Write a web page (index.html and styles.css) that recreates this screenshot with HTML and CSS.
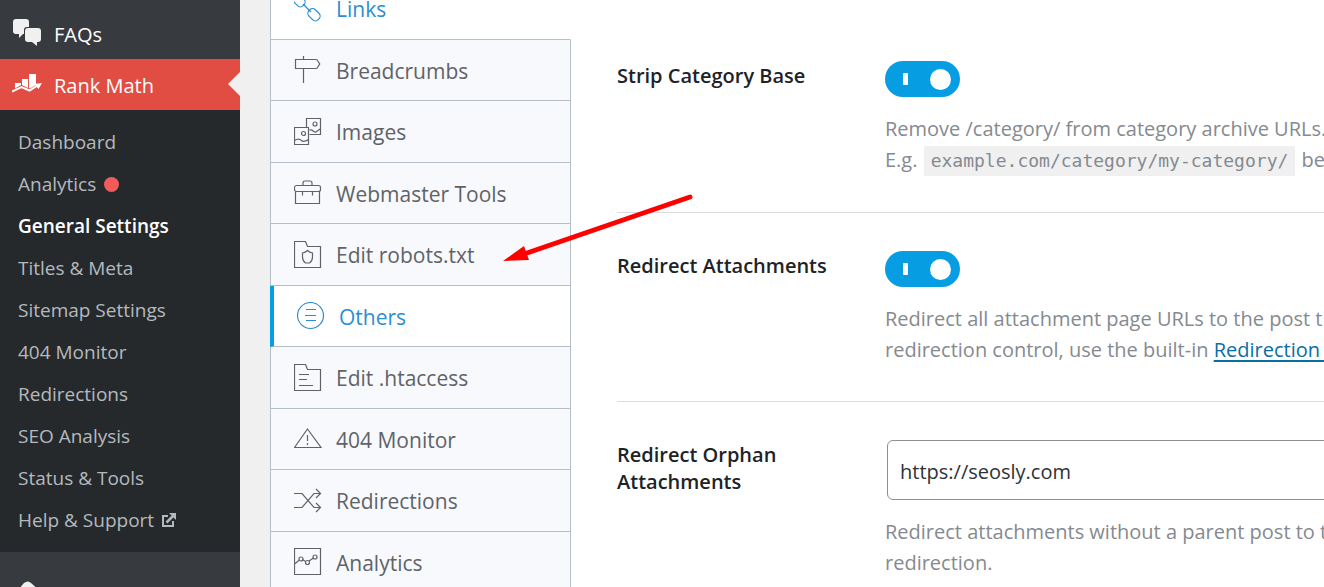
FILE: index.html
```html
<!DOCTYPE html>
<html lang="en">
<head>
    <meta charset="UTF-8">
    <meta name="viewport" content="width=device-width, initial-scale=1.0">
    <title>General Settings | Rank Math</title>
    <link rel="stylesheet" href="styles.css">
</head>
<body>
    <div class="page">
        <aside class="sidebar">
            <a href="#" class="menu-item">
                <svg class="menu-icon" viewBox="0 0 30 30" fill="#f0f0f1">
                    <path d="M4 0h10q3 0 3 3v5h-2q-3 0-3 3v4h-1l-4 4v-4H4q-3 0-3-3V3q0-3 3-3z"/>
                    <path d="M16 9h10q3 0 3 3v8q0 3-3 3h-1v4l-5-4h-4q-3 0-3-3v-8q0-3 3-3z"/>
                </svg>
                FAQs
            </a>
            <a href="#" class="menu-item current">
                <svg class="menu-icon" viewBox="0 0 30 30" fill="#fff">
                    <path d="M3 13h6v2l-6 3.500zM10 9h6v9l-6-3zM17 4h7v11l-6 3.500-1-.5z"/>
                    <path d="M0 21.500l9.500-4.500 8 3.500 8-5" fill="none" stroke="#fff" stroke-width="2"/>
                    <path d="M22.500 14l7.500-1-3.500 6z"/>
                </svg>
                Rank Math
            </a>
            <ul class="submenu">
                <li><a href="#">Dashboard</a></li>
                <li><a href="#">Analytics <span class="dot"></span></a></li>
                <li><a href="#" class="active">General Settings</a></li>
                <li><a href="#">Titles &amp; Meta</a></li>
                <li><a href="#">Sitemap Settings</a></li>
                <li><a href="#">404 Monitor</a></li>
                <li><a href="#">Redirections</a></li>
                <li><a href="#">SEO Analysis</a></li>
                <li><a href="#">Status &amp; Tools</a></li>
                <li><a href="#">Help &amp; Support
                    <svg class="external" viewBox="0 0 14 14" fill="none" stroke="#b4b9be" stroke-width="2">
                        <path d="M6 3H1v10h10V8"/>
                        <path d="M4.500 9.500L11 3" stroke-width="2.500"/>
                        <path d="M7 0h7v7z" fill="#b4b9be" stroke="none"/>
                    </svg>
                </a></li>
            </ul>
            <a href="#" class="menu-item next" aria-label="Appearance">
                <svg class="menu-icon" viewBox="0 0 30 30" fill="#f0f0f1">
                    <path d="M12 4q4-3 7 0l9 8-8 8L12 9l-3 4-3-2z"/>
                </svg>
            </a>
        </aside>

        <main class="panel">
            <nav class="tabs">
                <a href="#" class="tab hover">
                    <svg class="tab-icon" viewBox="0 0 28 28">
                        <rect x="-1" y="1" width="13" height="9" rx="4" transform="rotate(45 5 5)"/>
                        <rect x="14" y="15" width="13" height="9" rx="4" transform="rotate(45 20 19)"/>
                        <path d="M9 9l8 8"/>
                    </svg>
                    Links
                </a>
                <a href="#" class="tab">
                    <svg class="tab-icon" viewBox="0 0 28 28">
                        <path d="M9.500 0v3M9.500 12.500V27M1.500 3.500h20.500q1 0 1.500 1l2 3q.5.500 0 1l-2 3q-.5 1-1.500 1H1.500z"/>
                    </svg>
                    Breadcrumbs
                </a>
                <a href="#" class="tab">
                    <svg class="tab-icon" viewBox="0 0 28 28">
                        <path d="M12.500 9.500v-9h14v16H15.500M.500 9.500h14v17H.500zM.500 22.500c3-2 5-2 7 0s4 1 7-1M15.500 12c4-1 4 3 6.500 2l4-3"/>
                        <circle cx="9.500" cy="15.500" r="2"/>
                        <circle cx="21" cy="6" r="2"/>
                    </svg>
                    Images
                </a>
                <a href="#" class="tab">
                    <svg class="tab-icon" viewBox="0 0 28 28">
                        <rect x=".5" y="6.500" width="26" height="6" rx="2"/>
                        <path d="M1.500 12.500v12h24v-12M9 6V4q0-2 2-2h5q2 0 2 2v2M8.500 12.500v4M18.500 12.500v4"/>
                    </svg>
                    Webmaster Tools
                </a>
                <a href="#" class="tab">
                    <svg class="tab-icon" viewBox="0 0 28 28">
                        <path d="M.500.500h11l2 5h13v21H.500z"/>
                        <path d="M13.500 9.500q2 2 5 2.500v4q0 4-3 6h-4q-3-2-3-6v-4q3-.5 5-2.500z"/>
                    </svg>
                    Edit robots.txt
                </a>
                <a href="#" class="tab selected">
                    <svg class="tab-icon" viewBox="0 0 28 28">
                        <circle cx="13.500" cy="13.500" r="13"/>
                        <path d="M9 7.500h10M8 13.500h11M9 18.500h10"/>
                    </svg>
                    Others
                </a>
                <a href="#" class="tab">
                    <svg class="tab-icon" viewBox="0 0 28 28">
                        <path d="M.500.500h11l2 5h13v21H.500zM5 10.500h10M5 15.500h8M5 21.500h14"/>
                    </svg>
                    Edit .htaccess
                </a>
                <a href="#" class="tab">
                    <svg class="tab-icon" viewBox="0 0 28 28">
                        <path d="M13.500 4L27 22.500H.500zM13.500 10v6M13.500 18v2"/>
                    </svg>
                    404 Monitor
                </a>
                <a href="#" class="tab">
                    <svg class="tab-icon" viewBox="0 0 28 28">
                        <path d="M0 6.500h8l12 14h6M0 20.500h8l12-14h6M22 2l4.500 4.500L22 11M22 16l4.500 4.500L22 25"/>
                    </svg>
                    Redirections
                </a>
                <a href="#" class="tab">
                    <svg class="tab-icon" viewBox="0 0 28 28">
                        <path d="M.500.500h26v26H.500zM.500 16l5-4M8.500 11.500l3 2M15 13l4.500-3"/>
                        <circle cx="7" cy="11" r="2"/>
                        <circle cx="13.500" cy="14.500" r="2"/>
                        <circle cx="21" cy="9" r="2"/>
                    </svg>
                    Analytics
                </a>
            </nav>

            <form class="settings">
                <div class="row">
                    <label class="label" for="strip-category">Strip Category Base</label>
                    <div class="field">
                        <input type="checkbox" role="switch" class="toggle" id="strip-category" checked>
                        <p class="desc">Remove /category/ from category archive URLs.<br>
                        E.g. <code>example.com/category/my-category/</code> be</p>
                    </div>
                </div>
                <div class="row">
                    <label class="label" for="redirect-attachments">Redirect Attachments</label>
                    <div class="field">
                        <input type="checkbox" role="switch" class="toggle" id="redirect-attachments" checked>
                        <p class="desc">Redirect all attachment page URLs to the post th<br>
                        redirection control, use the built-in <a href="#">Redirection &nbsp;</a></p>
                    </div>
                </div>
                <div class="row">
                    <label class="label" for="redirect-orphan">Redirect Orphan Attachments</label>
                    <div class="field">
                        <input type="text" class="text-input" id="redirect-orphan" value="https://seosly.com">
                        <p class="desc">Redirect attachments without a parent post to t<br>
                        redirection.</p>
                    </div>
                </div>
            </form>
        </main>

        <svg class="arrow" viewBox="0 0 190 68">
            <path d="M24 59L187 3" stroke="#f00" stroke-width="5" stroke-linecap="round"/>
            <path d="M0 67l21-15 5 14z" fill="#f00"/>
        </svg>
    </div>
</body>
</html>
```
FILE: styles.css
```css
* { box-sizing: border-box; }
body { margin: 0; background: #f0f0f1; color: #1d2327; font-family: "Open Sans", "Noto Sans", sans-serif; font-size: 20px; }
a { text-decoration: none; }
.page { position: relative; display: flex; align-items: stretch; height: 100vh; overflow: hidden; }

/* admin menu */
.sidebar { flex: 0 0 240px; background: #373b3f; padding-top: 8px; }
.menu-item { position: relative; display: flex; align-items: center; gap: 12px; height: 51px; padding: 1px 12px 0; color: #fff; font-size: 20px; }
.menu-icon { width: 30px; height: 30px; }
.menu-item.current { background: #e14d43; }
.menu-item.current::after { content: ""; position: absolute; right: 0; top: 13px; border: 12px solid transparent; border-left: 0; border-right-color: #f0f0f1; }
.menu-item.next { margin-top: 16px; }
.submenu { list-style: none; margin: 0; padding: 11px 0; background: #26292c; }
.submenu a { display: flex; align-items: center; height: 42px; padding: 0 18px; gap: 8px; color: #b4b9be; font-size: 19px; }
.submenu a.active { color: #fff; font-weight: 600; }
.dot { width: 15px; height: 15px; border-radius: 50%; background: #f05b5b; }
.external { width: 14px; height: 14px; }

/* settings panel */
.panel { flex: 1; min-width: 0; display: flex; margin-left: 30px; background: #fff; }
.tabs { flex: 0 0 301px; margin-top: -22px; }
.tab { display: flex; align-items: center; gap: 14px; padding: 16px 23px 13px; border: 1px solid #b5bfc9; border-top: 0; background: #f8f9fc; color: #5f6368; font-size: 21px; line-height: 1.5; }
.tab-icon { flex: none; width: 28px; height: 28px; margin-bottom: 2px; fill: none; stroke: currentColor; stroke-width: 1.2; }
.tab.hover { background: #fff; color: #2a8fd0; border-right-color: transparent; }
.tab.selected { background: #fff; color: #2a8fd0; border-left: 4px solid #069de3; }

.settings { flex: 1; min-width: 0; padding: 23px 0 0 46px; }
.row { display: flex; padding: 38px 0 36px; border-bottom: 1px solid #dcdcde; }
.label { flex: 0 0 268px; padding: 1px 50px 0 0; font-size: 20px; font-weight: 600; line-height: 27px; }
.field { flex: 1; min-width: 0; white-space: nowrap; }
.toggle { appearance: none; display: flex; align-items: center; justify-content: space-between; width: 75px; height: 36px; margin: 0; padding: 0 9px 0 18px; border-radius: 18px; background: #069de3; }
.toggle::before { content: ""; width: 5px; height: 12px; border-radius: 1px; background: #fff; }
.toggle::after { content: ""; width: 21px; height: 21px; border-radius: 50%; background: #fff; }
.desc { margin: 16px 0 0; color: #858a90; font-size: 20px; line-height: 31px; }
.desc a { color: #0a6ea3; text-decoration: underline; text-decoration-thickness: 2px; text-underline-offset: 3px; }
.desc code { display: inline-block; margin: 0 1px; padding: 0 7px; background: #f0f0f1; font-family: "DejaVu Sans Mono", monospace; font-size: 18px; line-height: 30px; }
.text-input { width: 600px; height: 60px; margin: 0 2px; padding: 2px 12px 0; border: 1px solid #8c8f94; border-radius: 6px; color: #2c3338; font: inherit; }

/* pointer drawn over the tabs */
.arrow { position: absolute; left: 503px; top: 194px; width: 190px; height: 68px; fill: none; pointer-events: none; }
```
